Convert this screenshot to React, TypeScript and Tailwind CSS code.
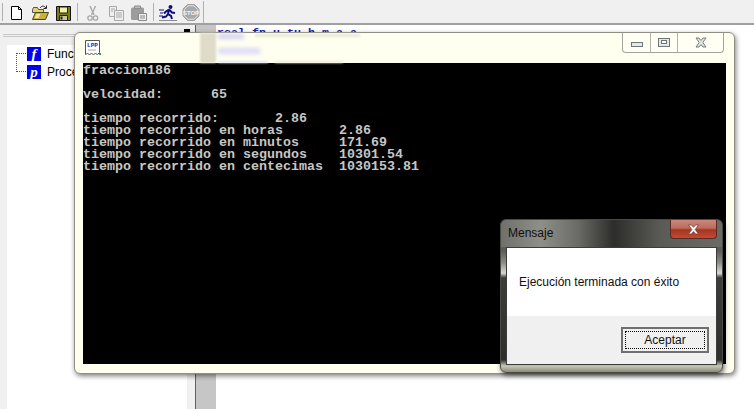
import React from "react";

const consoleText = [
  "fraccion186",
  "",
  "velocidad:      65",
  "",
  "tiempo recorrido:       2.86",
  "tiempo recorrido en horas       2.86",
  "tiempo recorrido en minutos     171.69",
  "tiempo recorrido en segundos    10301.54",
  "tiempo recorrido en centecimas  1030153.81",
].join("\n");

function NewIcon() {
  return (
    <svg width="18" height="18" viewBox="0 0 18 18">
      <path d="M3.5 3.5h7l3 3v10h-10z" fill="#fff" stroke="#000" />
      <path d="M10.5 3.5v3h3" fill="none" stroke="#000" />
    </svg>
  );
}

function OpenIcon() {
  return (
    <svg width="18" height="18" viewBox="0 0 18 18">
      <path d="M1.5 6.5l1-2h4l1 2h5v3h-11z" fill="#e8d070" stroke="#555" />
      <path d="M1.5 16.5l3-7h13l-3 7z" fill="#c8b040" stroke="#4a4a10" />
      <path d="M3.5 15l2-4h4l-2 4z" fill="#f0e8a0" />
      <path d="M9 5c2-2.5 4-2.5 6 0M15.5 2.5v3h-3" fill="none" stroke="#222" />
    </svg>
  );
}

function SaveIcon() {
  return (
    <svg width="18" height="18" viewBox="0 0 18 18">
      <path d="M2.5 3.5h14v14h-14z" fill="#7c7c14" stroke="#111" />
      <path d="M5.5 4h8v6h-8z" fill="#f0f0b0" stroke="#222" />
      <path d="M5.5 12.5h8v5h-8z" fill="#c8c8a0" stroke="#222" />
      <path d="M6.5 13.5h2v3h-2z" fill="#222" />
    </svg>
  );
}

function CutIcon() {
  return (
    <svg width="18" height="18" viewBox="0 0 18 18" fill="none" stroke="#a8a8a8">
      <path d="M6 3l4 9M11.5 3l-4 9" strokeWidth="1.4" />
      <circle cx="6" cy="15" r="2.2" strokeWidth="1.3" />
      <circle cx="11.5" cy="15" r="2.2" strokeWidth="1.3" />
    </svg>
  );
}

function CopyIcon() {
  return (
    <svg width="18" height="18" viewBox="0 0 18 18" stroke="#a8a8a8" fill="#efefef">
      <path d="M2.5 3.5h7v10h-7z" />
      <path d="M7.5 7.5h9v10h-9z" />
      <path d="M4 6h4M4 8h2M9 10h6M9 12h6M9 14h6" fill="none" />
    </svg>
  );
}

function PasteIcon() {
  return (
    <svg width="18" height="18" viewBox="0 0 18 18">
      <path d="M1 6q0-1.500 1.500-1.500h10Q14 4.500 14 6v11H2.500Q1 17 1 15.500z" fill="#9c9c9c" />
      <path d="M4.500 3h6v2.500h-6z" fill="#bdbdbd" stroke="#8c8c8c" />
      <path d="M8.500 10.500h8v7h-8z" fill="#efefef" stroke="#8a8a8a" />
      <path d="M10 13h5M10 15h5" stroke="#8a8a8a" />
    </svg>
  );
}

function RunIcon() {
  return (
    <svg width="18" height="18" viewBox="0 0 18 18">
      <path d="M0 18h18" stroke="#8a8a8a" strokeWidth="2" />
      <circle cx="11.500" cy="4" r="2" fill="#10107a" />
      <path d="M10 6.500l-3 2-2 2M10 6.500l3 3 3 .5M10 6.500l-1 4.500 3 2 1 3M9 11l-2 2.500-4 1" fill="none" stroke="#10107a" strokeWidth="2" />
      <path d="M0 7h5M1 10h3M0 13h4" stroke="#10107a" />
    </svg>
  );
}

function StopIcon() {
  return (
    <svg width="18" height="18" viewBox="0 0 18 18">
      <path d="M5.500 1.500h7l4.500 4.500v7l-4.500 4.500h-7L1 13V6z" fill="#a8a8a8" stroke="#a0a0a0" />
      <path d="M6 2.800h6l3.700 3.700v6L12 16.200H6L2.300 12.500v-6z" fill="none" stroke="#e4e4e4" />
      <text x="9" y="12" textAnchor="middle" fontSize="6" fontWeight="700" fill="#f2f2f2" fontFamily="Liberation Sans, sans-serif">STOP</text>
    </svg>
  );
}

function TreeBadge({ letter }: { letter: string }) {
  return (
    <span className="flex h-[14px] w-[14px] shrink-0 items-center justify-center bg-[#0000f0] font-['Liberation_Serif',serif] text-[15px] leading-none font-bold text-white italic">
      {letter}
    </span>
  );
}

function ConsoleWindow() {
  return (
    <div className="absolute top-[32px] left-[74px] flex h-[342px] w-[661px] flex-col rounded-[6px] border border-[#8f8f86] bg-[#fffff0] shadow-[1px_2px_5px_rgba(0,0,0,0.5)]">
      <div className="relative h-[30px] shrink-0">
        {/* what shows through the glass title bar */}
        <div className="absolute top-0 left-[125px] h-[30px] w-[16px] bg-[#dfdbc8] blur-[1px]" />
        <div className="absolute top-[1px] left-[143px] h-[5px] w-[26px] bg-[#d0d0f2] blur-[2px]" />
        <div className="absolute top-[15px] left-[143px] h-[6px] w-[42px] bg-[#dadaf6] blur-[2px]" />
        <div className="absolute top-[1px] left-[180px] h-[3px] w-[105px] bg-[#ecead8] blur-[1px]" />
        <div className="absolute top-[28px] left-[143px] h-[2px] w-[50px] bg-[#e2e2f2] blur-[1px]" />
        <div className="absolute top-[28px] left-[200px] h-[2px] w-[68px] bg-[#f0eedc] blur-[1px]" />
        <svg className="absolute top-[6px] left-[9px]" width="18" height="18" viewBox="0 0 18 18">
          <path d="M1.500 1.500h14v12l-2 2-2-1-2 1-2-1-2 1-2-1-2 1z" fill="#fff" stroke="#555" />
          <text x="8.500" y="8" textAnchor="middle" fontSize="6" fontWeight="700" fill="#1818c8" fontFamily="Liberation Mono, monospace">LPP</text>
          <path d="M4 11h8" stroke="#aaa" />
          <path d="M15 14h2v2h-2z" fill="#209090" />
        </svg>
        <div className="absolute top-0 right-[10px] flex h-[20px] w-[102px] items-center rounded-b-[4px] border border-t-0 border-[#a3a39a] bg-[#fffff4]">
          <div className="flex h-full w-[28px] items-center justify-center border-r border-[#b4b4aa]">
            <span className="mt-[4px] block h-[5px] w-[12px] border border-[#6f7478] bg-[#e6e8e4]" />
          </div>
          <div className="flex h-full w-[27px] items-center justify-center border-r border-[#b4b4aa]">
            <span className="mb-[1px] flex h-[9px] w-[12px] items-center justify-center border border-[#6f7478] bg-[#e6e8e4]">
              <span className="block h-[4px] w-[6px] border border-[#6f7478] bg-[#fffff4]" />
            </span>
          </div>
          <div className="flex flex-1 items-center justify-center">
            <svg width="12" height="11" viewBox="0 0 12 11">
              <path d="M1 1h3l2 2.500L8 1h3L7.800 5.500 11 10H8L6 7.500 4 10H1l3.200-4.500z" fill="#e6e8e4" stroke="#74797c" />
            </svg>
          </div>
        </div>
      </div>
      <pre className="mx-[8px] h-[301px] overflow-hidden bg-black pt-[2px] font-['Liberation_Mono',monospace] text-[13.33px] leading-[12px] font-bold text-[#c6c6c6]">
        {consoleText}
      </pre>
    </div>
  );
}

function MessageDialog() {
  return (
    <div className="absolute top-[219px] left-[500px] h-[154px] w-[223px] rounded-[6px] border border-[#4a4a44] bg-[linear-gradient(180deg,#6c6c68_0%,#5a5a56_20%,#8a8a86_28%,#d8d8d4_35%,#3c3c3a_38%,#2e2e2c_92%,#c8c8b8_96%,#8a8a78_100%)] shadow-[1px_2px_5px_rgba(0,0,0,0.6)]">
      <div className="absolute top-0 right-0 left-0 h-[27px] rounded-t-[6px] bg-[linear-gradient(90deg,#6f6f6b_0%,#8f8f8a_18%,#6a6a66_35%,#2d2d2b_51%,#5a5a56_72%,#6a6a66_100%)]" />
      <span className="absolute top-[5px] left-[7px] font-['Liberation_Sans',sans-serif] text-[12px] leading-[16px] text-[#101010]">Mensaje</span>
      <div className="absolute top-0 right-[5px] flex h-[19px] w-[47px] items-center justify-center rounded-b-[4px] border border-t-0 border-[#5a2a22] bg-[linear-gradient(180deg,#c8897c_0%,#bc6c5e_45%,#a83420_55%,#c04c36_100%)]">
        <svg width="13" height="11" viewBox="0 0 13 11">
          <path d="M1.500 1h3l2 2.300L8.500 1h3L8.200 5.500l3.300 4.500h-3l-2-2.500-2 2.500h-3l3.300-4.500z" fill="#f4f4f4" stroke="#6a3a34" strokeWidth="0.7" />
        </svg>
      </div>
      <div className="absolute top-[27px] right-[5px] left-[5px] flex h-[118px] flex-col border border-[#3c3c3a] bg-white">
        <div className="flex h-[68px] items-center pl-[12px] font-['Liberation_Sans',sans-serif] text-[12px] text-[#101010]">
          <span>Ejecución terminada con éxito</span>
        </div>
        <div className="flex flex-1 items-start justify-end bg-[#f0f0f0] pt-[11px] pr-[7px]">
          <button className="flex h-[26px] w-[88px] items-center justify-center border-2 border-[#70706e] bg-[#f0f0f0] p-[2px] font-['Liberation_Sans',sans-serif] text-[12px] text-[#101010]">
            <span className="flex h-full w-full items-center justify-center border border-dotted border-black">Aceptar</span>
          </button>
        </div>
      </div>
    </div>
  );
}

export default function App() {
  return (
    <div className="relative flex h-[409px] w-[754px] flex-col overflow-hidden bg-white font-['Liberation_Sans',sans-serif]">
      <div className="flex h-[25px] shrink-0 items-center gap-[5px] border-b-2 border-[#a0a0a0] bg-[#f0f0f0] pl-[8px]">
        <span className="-ml-[6px] h-[18px] w-px bg-[#b0b0b0]" />
        <NewIcon />
        <OpenIcon />
        <SaveIcon />
        <span className="mr-[1px] h-[18px] w-px bg-[#b0b0b0]" />
        <CutIcon />
        <CopyIcon />
        <PasteIcon />
        <span className="h-[18px] w-px bg-[#b0b0b0]" />
        <RunIcon />
        <StopIcon />
        <span className="-ml-[2px] h-[22px] w-px bg-[#b0b0b0]" />
      </div>
      <div className="flex flex-1">
        <div className="relative w-[187px] shrink-0 bg-[#f0f0f0]">
          <div className="flex h-[20px] items-center px-[3px]">
            <div className="h-[3px] w-full border-y border-[#c8c8c8]" />
          </div>
          <span className="absolute top-[4px] right-[-3px] h-[3px] w-[6px] bg-black" />
          <div className="ml-[7px] h-[364px] bg-white">
            <div className="relative flex w-[67px] flex-col gap-[4px] overflow-hidden pt-[2px] pl-[20px] text-[12px] leading-[14px] text-black">
              <div className="absolute top-[8px] left-[9px] h-[19px] w-[10px] border-b border-l border-dotted border-[#555]" />
              <div className="absolute top-[8px] left-[9px] w-[10px] border-t border-dotted border-[#555]" />
              <div className="flex items-center gap-[6px] whitespace-nowrap"><TreeBadge letter="f" />Funciones</div>
              <div className="flex items-center gap-[6px] whitespace-nowrap"><TreeBadge letter="p" />Procedimientos</div>
            </div>
          </div>
        </div>
        <div className="w-[9px] shrink-0 border-r border-[#606060] bg-[#f0f0f0]" />
        <div className="w-[20px] shrink-0 bg-[#c6c6c6]" />
        <div className="h-[8px] flex-1 overflow-hidden bg-white pt-[2px] pl-px font-['Liberation_Mono',monospace] text-[11.67px] leading-[12px] font-bold whitespace-pre text-[#1818a8]">real fn u tu h m a a</div>
      </div>
      <ConsoleWindow />
      <MessageDialog />
    </div>
  );
}
